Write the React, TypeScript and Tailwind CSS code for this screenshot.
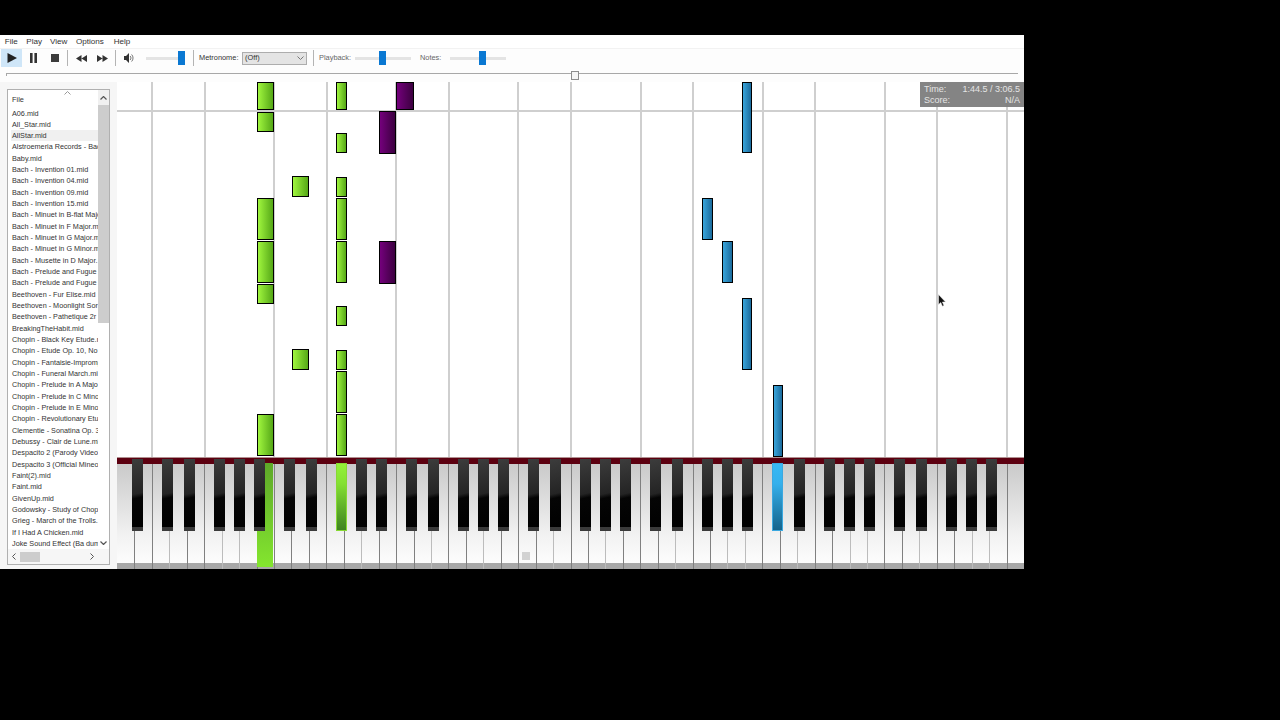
import React from "react";

const files = [
  "A06.mid","All_Star.mid","AllStar.mid","Alstroemeria Records - Bac","Baby.mid",
  "Bach - Invention 01.mid","Bach - Invention 04.mid","Bach - Invention 09.mid","Bach - Invention 15.mid",
  "Bach - Minuet in B-flat Majo","Bach - Minuet in F Major.m","Bach - Minuet in G Major.m","Bach - Minuet in G Minor.m",
  "Bach - Musette in D Major.","Bach - Prelude and Fugue i","Bach - Prelude and Fugue i ",
  "Beethoven - Fur Elise.mid","Beethoven - Moonlight Sor","Beethoven - Pathetique 2r","BreakingTheHabit.mid",
  "Chopin - Black Key Etude.m","Chopin - Etude Op. 10, No","Chopin - Fantaisie-Impromp","Chopin - Funeral March.mi",
  "Chopin - Prelude in A Majo","Chopin - Prelude in C Minor","Chopin - Prelude in E Minor","Chopin - Revolutionary Etu.",
  "Clementie - Sonatina Op. 3","Debussy - Clair de Lune.mi","Despacito 2 (Parody Video)","Despacito 3 (Official Mineo",
  "Faint(2).mid","Faint.mid","GivenUp.mid","Godowsky - Study of Chop","Grieg - March of the Trolls.","If I Had A Chicken.mid",
  "Joke Sound Effect (Ba dum",
];

const KEY = 907 / 52;
const X0 = 117;
const Y0 = 82;

const gridLines = [2,5,9,12,16,19,23,26,30,33,37,40,44,47,51];
const lightLines = new Set([3,6,7,14,18,21,25,28,32,35,36,39,42,43,46,49,50]);
const blackX = [137,167,189,219,239,259,289,311,341,361,381,411,433,463,483,503,533,555,585,605,625,655,677,707,727,747,777,799,829,849,869,899,921,951,971,991];

type N = { c: "g" | "p" | "b"; l: number; r: number; t: number; b: number };
const notes: N[] = [
  {c:"g",l:257,r:274,t:82,b:110},{c:"g",l:257,r:274,t:112,b:132},{c:"g",l:336,r:347,t:82,b:110},{c:"g",l:336,r:347,t:133,b:153},
  {c:"g",l:292,r:309,t:176,b:197},{c:"g",l:336,r:347,t:177,b:197},{c:"g",l:257,r:274,t:198,b:240},{c:"g",l:336,r:347,t:198,b:240},
  {c:"g",l:257,r:274,t:241,b:283},{c:"g",l:336,r:347,t:241,b:283},{c:"g",l:257,r:274,t:284,b:304},{c:"g",l:336,r:347,t:306,b:326},
  {c:"g",l:292,r:309,t:349,b:370},{c:"g",l:336,r:347,t:350,b:370},{c:"g",l:336,r:347,t:371,b:413},{c:"g",l:257,r:274,t:414,b:456},
  {c:"g",l:336,r:347,t:414,b:456},
  {c:"p",l:396,r:414,t:82,b:110},{c:"p",l:379,r:396,t:111,b:154},{c:"p",l:379,r:396,t:241,b:284},
  {c:"b",l:742,r:752,t:82,b:153},{c:"b",l:702,r:713,t:198,b:240},{c:"b",l:722,r:733,t:241,b:283},{c:"b",l:742,r:752,t:298,b:370},{c:"b",l:773,r:783,t:385,b:457},
];
const noteClass = {
  g: "bg-gradient-to-r from-[#a0f63e] to-[#55a816]",
  p: "bg-gradient-to-r from-[#74007c] to-[#3c0040]",
  b: "bg-gradient-to-r from-[#3aa6dc] to-[#1b6b9c]",
};

function Slider({ track, thumb }: { track: string; thumb: string }) {
  return (
    <div className={`relative flex h-[14px] items-center ${track}`}>
      <div className="h-[3px] w-full bg-[#e4e4e4]" />
      <div className={`absolute top-0 h-[14px] w-[7px] bg-[#0a78d2] ${thumb}`} />
    </div>
  );
}

function Sep({ className }: { className: string }) {
  return <div className={`h-[16px] w-[1px] bg-[#b4b4b4] ${className}`} />;
}

export default function App() {
  return (
    <div className="relative h-[720px] w-[1280px] overflow-hidden bg-black pt-[35px] font-['Liberation_Sans',sans-serif] text-[7.4px] text-[#333333]">
      <div className="flex h-[534px] w-[1024px] flex-col bg-white">
        {/* menu */}
        <div className="flex h-[13px] items-center bg-white pl-[4.7px] text-[8.1px] leading-[12px]">
          <span className="w-[21.6px]">File</span>
          <span className="w-[23.7px]">Play</span>
          <span className="w-[26px]">View</span>
          <span className="w-[37.7px]">Options</span>
          <span>Help</span>
        </div>
        {/* toolbar */}
        <div className="flex h-[19px] items-center border-t border-[#f2f2f2] bg-[#fdfdfd]">
          <div className="ml-[1px] flex h-[18px] w-[21px] items-center justify-center bg-[#cfe6f8]">
            <svg width="10" height="10" viewBox="0 0 10 10"><path d="M0.5 0 L10 5 L0.5 10 Z" fill="#222" /></svg>
          </div>
          <div className="flex w-[22px] justify-center">
            <svg width="7" height="10" viewBox="0 0 7 10"><path d="M0 0h2.6v10H0zM4.4 0H7v10H4.4z" fill="#333" /></svg>
          </div>
          <div className="flex w-[21px] justify-center">
            <svg width="8" height="8" viewBox="0 0 8 8"><rect width="8" height="8" fill="#3c3c3c" /></svg>
          </div>
          <Sep className="ml-[2px]" />
          <div className="ml-[3px] flex w-[21px] justify-center">
            <svg width="11" height="7" viewBox="0 0 11 7"><path d="M5.5 0v7L0 3.5zM11 0v7L5.5 3.5z" fill="#333" /></svg>
          </div>
          <div className="flex w-[21px] justify-center">
            <svg width="11" height="7" viewBox="0 0 11 7"><path d="M0 0v7l5.5-3.5zM5.5 0v7L11 3.5z" fill="#333" /></svg>
          </div>
          <Sep className="ml-[2px]" />
          <div className="ml-[8px] flex w-[10px] justify-center">
            <svg width="10" height="10" viewBox="0 0 10 10"><path d="M0 3h2l3-3v10L2 7H0z" fill="#333" /><path d="M6.2 3a3 3 0 0 1 0 4M7.6 1.5a5 5 0 0 1 0 7" fill="none" stroke="#555" strokeWidth="0.8" /></svg>
          </div>
          <Slider track="ml-[12px] w-[39px]" thumb="left-[32px]" />
          <Sep className="ml-[8px]" />
          <span className="ml-[5px] w-[43px] whitespace-nowrap">Metronome:</span>
          <div className="flex h-[13px] w-[65px] items-center justify-between border border-[#adadad] bg-[#e4e4e4] pl-[2px] pr-[2px]">
            <span>(Off)</span>
            <svg width="7" height="4" viewBox="0 0 7 4"><path d="M0.5 0.5 L3.5 3.5 L6.5 0.5" fill="none" stroke="#777" /></svg>
          </div>
          <Sep className="ml-[6px]" />
          <span className="ml-[5px] w-[36px] text-[#666]">Playback:</span>
          <Slider track="w-[56px]" thumb="left-[24px]" />
          <span className="ml-[9px] w-[30px] text-[#666]">Notes:</span>
          <Slider track="w-[56px]" thumb="left-[29px]" />
        </div>
        {/* scrubber */}
        <div className="relative h-[15px] bg-[#fdfdfd]">
          <div className="ml-[6px] mt-[6px] h-[1px] w-[1012px] bg-[#a8a8a8]" />
          <div className="absolute left-[6px] top-[6px] h-[3px] w-[1px] bg-[#a8a8a8]" />
          <div className="absolute left-[571px] top-[4px] h-[9px] w-[8px] border border-[#8c8c8c] bg-[#f4f4f4]" />
        </div>
        {/* main */}
        <div className="flex min-h-0 flex-1">
          <div className="w-[117px] bg-[#f6f6f6] pl-[7px] pr-[7px] pt-[7px]">
            <div className="flex h-[476px] w-[103px] flex-col border border-[#b0b0b0] bg-white">
              <div className="flex min-h-0 flex-1">
                <div className="w-[90px] overflow-hidden pl-[4px]">
                  <div className="relative h-[17.5px] pt-[4px]">
                    File
                    <svg className="absolute left-[52px] top-[1px]" width="7" height="4" viewBox="0 0 7 4"><path d="M0.5 3.5 L3.5 0.5 L6.5 3.5" fill="none" stroke="#999" /></svg>
                  </div>
                  {files.map((f, i) => (
                    <div
                      key={f}
                      className={`h-[11.33px] whitespace-nowrap text-[7.25px] leading-[11.33px] ${i === 2 ? "-ml-[1px] bg-[#f0f0f0] pl-[1px]" : ""}`}
                    >
                      {f}
                    </div>
                  ))}
                </div>
                <div className="flex w-[11px] flex-col bg-[#f0f0f0]">
                  <div className="flex h-[15px] items-center justify-center">
                    <svg width="7" height="4" viewBox="0 0 7 4"><path d="M0.5 3.5 L3.5 0.5 L6.5 3.5" fill="none" stroke="#555" strokeWidth="1.2" /></svg>
                  </div>
                  <div className="h-[218px] bg-[#cdcdcd]" />
                  <div className="flex-1 bg-white" />
                  <div className="flex h-[12px] items-center justify-center bg-white">
                    <svg width="7" height="4" viewBox="0 0 7 4"><path d="M0.5 0.5 L3.5 3.5 L6.5 0.5" fill="none" stroke="#555" strokeWidth="1.2" /></svg>
                  </div>
                </div>
              </div>
              <div className="flex h-[15px] items-center bg-[#f6f6f6] pl-[4px]">
                <svg width="4" height="7" viewBox="0 0 4 7"><path d="M3.5 0.5 L0.5 3.5 L3.5 6.5" fill="none" stroke="#555" /></svg>
                <div className="ml-[4px] h-[10px] w-[20px] bg-[#cdcdcd]" />
                <svg className="ml-[50px]" width="4" height="7" viewBox="0 0 4 7"><path d="M0.5 0.5 L3.5 3.5 L0.5 6.5" fill="none" stroke="#555" /></svg>
              </div>
            </div>
          </div>
          {/* canvas */}
          <div className="relative flex w-[907px] flex-col">
            <div className="relative h-[375px] shrink-0 bg-white">
              {gridLines.map((i) => (
                <div key={i} className="absolute top-0 h-full w-[2px] bg-[#cfcfcf]" style={{ left: KEY * i - 0.7 }} />
              ))}
              <div className="absolute left-0 top-[28px] h-[2px] w-full bg-[#cfcfcf]" />
              {notes.map((n, i) => (
                <div
                  key={i}
                  className={`absolute border border-black ${noteClass[n.c]}`}
                  style={{ left: n.l - X0, width: n.r - n.l, top: n.t - Y0, height: n.b - n.t }}
                />
              ))}
              <div className="absolute right-0 top-0 flex h-[25px] w-[104px] justify-between bg-[#7d7d7d]/95 px-[4px] pt-[2px] text-[9px] leading-[10.5px] text-[#e4e4e4]">
                <div><div>Time:</div><div>Score:</div></div>
                <div className="text-right"><div>1:44.5 / 3:06.5</div><div>N/A</div></div>
              </div>
            </div>
            {/* piano */}
            <div className="relative flex-1 overflow-hidden bg-gradient-to-b from-[#c6c6c6] via-[#f2f2f2] via-70% to-white">
              <div className="absolute left-0 top-0 h-[7px] w-full border-t border-[#b09090] bg-[#5c0010]" />
              <div className="absolute bottom-0 left-0 h-[6px] w-full bg-[#a8a8a8]" />
              {Array.from({ length: 51 }, (_, k) => k + 1).map((i) => (
                <div
                  key={i}
                  className={`absolute bottom-0 top-[7px] w-[1px] ${lightLines.has(i) ? "bg-[#bcbcbc]" : "bg-[#808080]"}`}
                  style={{ left: KEY * i }}
                />
              ))}
              <div className="absolute left-[140px] top-[6px] h-[104px] w-[16px] bg-gradient-to-b from-[#5ea828] to-[#84e62f]" />
              <div className="absolute left-[405px] top-[95px] h-[8px] w-[8px] bg-[#d2d2d2]" />
              {blackX.map((x) => {
                const g = x === 341;
                const b = x === 777;
                return (
                  <div
                    key={x}
                    className={
                      g
                        ? "absolute top-[6px] h-[68px] w-[11px] border border-[#86d832] bg-gradient-to-b from-[#93f238] via-[#84e032] via-30% to-[#3f8420]"
                        : b
                        ? "absolute top-[6px] h-[68px] w-[11px] border border-[#3aa8e0] bg-gradient-to-b from-[#38b8f4] via-[#34b0ec] via-30% to-[#15648c]"
                        : "absolute top-[2px] flex h-[72px] w-[11px] flex-col justify-end bg-[linear-gradient(168deg,#3c3c3c_0%,#242424_48%,#050505_54%,#000000_100%)]"
                    }
                    style={{ left: x - 5.5 - X0 }}
                  >
                    {!g && !b && <div className="h-[4px] w-full bg-[#3a3a3a]" />}
                  </div>
                );
              })}
            </div>
          </div>
        </div>
      </div>
      {/* mouse cursor */}
      <svg className="absolute left-[938px] top-[294px]" width="8" height="13" viewBox="0 0 8 13">
        <path d="M0.5 0.5 V10.5 L2.8 8.5 L4.4 12.2 L6 11.5 L4.4 8 H7.5 Z" fill="#111" stroke="#eee" strokeWidth="0.5" />
      </svg>
    </div>
  );
}
